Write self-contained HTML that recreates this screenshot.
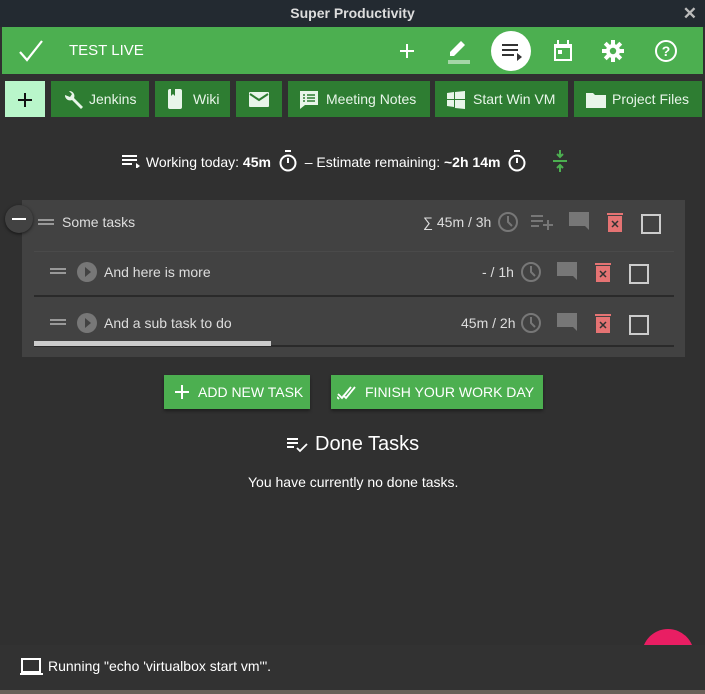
<!DOCTYPE html>
<html><head><meta charset="utf-8"><style>
*{box-sizing:border-box;margin:0;padding:0}
body{width:705px;height:694px;background:#303030;font-family:"Liberation Sans",sans-serif;color:#fff;position:relative;overflow:hidden}
.a{position:absolute}
.title{left:0;top:0;width:705px;height:27px;background:#232a31;text-align:center;font-weight:bold;font-size:14px;line-height:27px;color:#ddd}
.hdr{left:2px;top:27px;width:701px;height:47px;background:#4caf50}
.btn{position:absolute;top:81px;height:36px;background:#2e7d32;font-size:14px;line-height:36px;color:#e8f5e9}
.btn svg{position:absolute;top:8px}
.panel{left:22px;top:200px;width:663px;height:157px;background:#424242}
.t{font-size:14px;color:#ddd}
.gbtn{position:absolute;top:375px;height:34px;background:#4caf50;font-size:14px;line-height:34px;color:#fff;box-shadow:0 2px 3px rgba(0,0,0,.4)}
</style></head><body>
<div class="a title">Super Productivity<span style="position:absolute;right:8px;font-size:17px;color:#bbb">✕</span></div>
<div class="a hdr">
<svg class="a" style="left:16px;top:12px" width="26" height="24" viewBox="0 0 26 24"><path d="M2 13 L9 21 L24 2" stroke="#fff" stroke-width="2.2" fill="none"/></svg>
<div class="a" style="left:67px;top:15px;font-size:15px">TEST LIVE</div>
<svg class="a" style="left:397px;top:16px" width="16" height="16"><path d="M8 1v14M1 8h14" stroke="#fff" stroke-width="2"/></svg>
<svg class="a" style="left:444px;top:11px" width="26" height="26"><path d="M4 18 L4 14 L15 3 L19 7 L8 18Z" fill="#fff"/><rect x="2" y="22" width="22" height="4" fill="#a5d6a7"/></svg>
<div class="a" style="left:489px;top:4px;width:40px;height:40px;border-radius:50%;background:#fff"></div>
<svg class="a" style="left:499px;top:16px" width="22" height="18"><path d="M1 2h16M1 7h16M1 12h12" stroke="#333" stroke-width="2"/><path d="M16 10l5 4-5 4z" fill="#333"/></svg>
<svg class="a" style="left:551px;top:13px" width="20" height="22"><rect x="1" y="4" width="18" height="17" fill="#fff"/><rect x="4" y="0" width="2" height="5" fill="#fff"/><rect x="14" y="0" width="2" height="5" fill="#fff"/><rect x="3" y="8" width="14" height="11" fill="#4caf50"/><rect x="5" y="10" width="4" height="4" fill="#fff"/></svg>
<svg class="a" style="left:600px;top:13px" width="22" height="22" viewBox="0 0 22 22"><g fill="#fff"><circle cx="11" cy="11" r="7"/><rect x="9" y="0" width="4" height="22"/><rect x="0" y="9" width="22" height="4"/><rect x="9" y="0" width="4" height="22" transform="rotate(45 11 11)"/><rect x="9" y="0" width="4" height="22" transform="rotate(-45 11 11)"/></g><circle cx="11" cy="11" r="3.2" fill="#4caf50"/></svg>
<div class="a" style="left:653px;top:13px;width:22px;height:22px;border:2px solid #fff;border-radius:50%;font-size:14px;font-weight:bold;text-align:center;line-height:18px">?</div>
</div>
<div class="btn" style="left:5px;width:40px;background:#b9f6ca"><svg style="left:12px;top:11px" width="16" height="16"><path d="M8 1v14M1 8h14" stroke="#111" stroke-width="2"/></svg></div>
<div class="btn" style="left:51px;width:98px;padding-left:38px"><svg style="left:11px;top:8px" width="22" height="22" viewBox="0 0 22 22"><path d="M3 6 a5 5 0 0 0 7 5 l9 9 2-2-9-9 a5 5 0 0 0-5-7 l3 3-2 3z" fill="#e8f5e9"/></svg>Jenkins</div>
<div class="btn" style="left:155px;width:75px;padding-left:38px"><svg style="left:13px" width="14" height="20"><rect width="14" height="20" rx="2" fill="#e8f5e9"/><path d="M3 0v7l2-2 2 2V0" fill="#2e7d32"/></svg>Wiki</div>
<div class="btn" style="left:236px;width:46px"><svg style="left:13px;top:11px" width="20" height="15"><rect width="20" height="15" rx="1" fill="#e8f5e9"/><path d="M1 2l9 6 9-6" stroke="#2e7d32" stroke-width="2" fill="none"/></svg></div>
<div class="btn" style="left:288px;width:142px;padding-left:38px"><svg style="left:11px;top:9px" width="20" height="20"><path d="M1 1h18v14H6l-5 4z" fill="#e8f5e9"/><path d="M4 5h2M8 5h8M4 8h2M8 8h8M4 11h2M8 11h8" stroke="#2e7d32" stroke-width="1.6"/></svg>Meeting Notes</div>
<div class="btn" style="left:435px;width:133px;padding-left:38px"><svg style="left:12px;top:10px" width="18" height="18"><path d="M0 2l7-1v7H0zM8 1l10-1v8H8zM0 9h7v7l-7-1zM8 9h10v9l-10-1z" fill="#e8f5e9"/></svg>Start Win VM</div>
<div class="btn" style="left:574px;width:128px;padding-left:38px"><svg style="left:12px;top:11px" width="20" height="16"><path d="M0 1h7l2 2h11v13H0z" fill="#e8f5e9"/></svg>Project Files</div>

<div class="a" style="left:122px;top:150px;font-size:14px;line-height:20px;white-space:nowrap">
<svg width="20" height="14" style="vertical-align:-1px"><path d="M0 2h15M0 6h15M0 10h10" stroke="#fff" stroke-width="2"/><path d="M14 9l4 3-4 3z" fill="#fff"/></svg> Working today: <b>45m</b> <svg width="20" height="22" style="vertical-align:-5px;margin:0 3px"><rect x="7" y="0" width="6" height="2" fill="#fff"/><circle cx="10" cy="13" r="7.5" stroke="#fff" stroke-width="2" fill="none"/><path d="M10 13V8" stroke="#fff" stroke-width="2"/></svg> – Estimate remaining: <b>~2h 14m</b> <svg width="20" height="22" style="vertical-align:-5px;margin-left:3px"><rect x="7" y="0" width="6" height="2" fill="#fff"/><circle cx="10" cy="13" r="7.5" stroke="#fff" stroke-width="2" fill="none"/><path d="M10 13V8" stroke="#fff" stroke-width="2"/></svg>
</div>
<svg class="a" style="left:552px;top:150px" width="16" height="22"><path d="M8 0v6M5 4l3 3 3-3M8 22v-6M5 18l3-3 3 3" stroke="#4caf50" stroke-width="2" fill="none"/><path d="M1 11h14" stroke="#4caf50" stroke-width="2"/></svg>

<div class="a panel">
 <div class="a" style="left:12px;top:51px;width:640px;border-top:1px solid #4a4a4a"></div>
 <div class="a" style="left:12px;top:95px;width:640px;border-top:2px solid #2a2a2a"></div>
 <div class="a" style="left:12px;top:145px;width:640px;border-top:2px solid #2a2a2a"></div>
 <div class="a" style="left:12px;top:141px;width:237px;height:5px;background:#ccc"></div>
</div>
<div class="a" style="left:5px;top:205px;width:28px;height:28px;border-radius:50%;background:#424242;box-shadow:0 1px 3px rgba(0,0,0,.6)"><div class="a" style="left:7px;top:13px;width:14px;height:2px;background:#fff"></div></div>
<div class="a" style="left:38px;top:219px;width:16px;height:6px;border-top:2px solid #999;border-bottom:2px solid #999"></div>
<div class="a t" style="left:62px;top:214px">Some tasks</div>
<div class="a t" style="left:423px;top:214px">∑ 45m / 3h</div>
<svg class="a" style="left:497px;top:211px" width="22" height="22"><circle cx="11" cy="11" r="9" stroke="#777" stroke-width="2" fill="none"/><path d="M11 5v6l4 4" stroke="#777" stroke-width="2" fill="none"/></svg>
<svg class="a" style="left:531px;top:214px" width="24" height="16"><path d="M0 2h12M0 7h12M0 12h8M17 6v10M12 11h10" stroke="#777" stroke-width="2"/></svg>
<svg class="a" style="left:569px;top:212px" width="20" height="22"><path d="M0 0h20v18l-4-4H0z" fill="#777"/></svg>
<svg class="a" style="left:607px;top:212px" width="16" height="20"><rect x="1" y="4" width="14" height="16" fill="#e57373"/><rect x="0" y="1" width="16" height="2" fill="#e57373"/><path d="M5 9l6 6M11 9l-6 6" stroke="#333" stroke-width="1.5"/></svg>
<div class="a" style="left:641px;top:214px;width:20px;height:20px;border:2px solid #ccc"></div>

<div class="a" style="left:50px;top:268px;width:16px;height:6px;border-top:2px solid #999;border-bottom:2px solid #999"></div>
<div class="a" style="left:77px;top:262px;width:20px;height:20px;border-radius:50%;background:#777"><div class="a" style="left:8px;top:5px;border-left:6px solid #424242;border-top:5px solid transparent;border-bottom:5px solid transparent"></div></div>
<div class="a t" style="left:104px;top:264px">And here is more</div>
<div class="a t" style="left:482px;top:264px">- / 1h</div>
<svg class="a" style="left:520px;top:261px" width="22" height="22"><circle cx="11" cy="11" r="9" stroke="#777" stroke-width="2" fill="none"/><path d="M11 5v6l4 4" stroke="#777" stroke-width="2" fill="none"/></svg>
<svg class="a" style="left:557px;top:262px" width="20" height="22"><path d="M0 0h20v18l-4-4H0z" fill="#777"/></svg>
<svg class="a" style="left:595px;top:262px" width="16" height="20"><rect x="1" y="4" width="14" height="16" fill="#e57373"/><rect x="0" y="1" width="16" height="2" fill="#e57373"/><path d="M5 9l6 6M11 9l-6 6" stroke="#333" stroke-width="1.5"/></svg>
<div class="a" style="left:629px;top:264px;width:20px;height:20px;border:2px solid #ccc"></div>

<div class="a" style="left:50px;top:319px;width:16px;height:6px;border-top:2px solid #999;border-bottom:2px solid #999"></div>
<div class="a" style="left:77px;top:313px;width:20px;height:20px;border-radius:50%;background:#777"><div class="a" style="left:8px;top:5px;border-left:6px solid #424242;border-top:5px solid transparent;border-bottom:5px solid transparent"></div></div>
<div class="a t" style="left:104px;top:315px">And a sub task to do</div>
<div class="a t" style="left:461px;top:315px">45m / 2h</div>
<svg class="a" style="left:520px;top:312px" width="22" height="22"><circle cx="11" cy="11" r="9" stroke="#777" stroke-width="2" fill="none"/><path d="M11 5v6l4 4" stroke="#777" stroke-width="2" fill="none"/></svg>
<svg class="a" style="left:557px;top:313px" width="20" height="22"><path d="M0 0h20v18l-4-4H0z" fill="#777"/></svg>
<svg class="a" style="left:595px;top:313px" width="16" height="20"><rect x="1" y="4" width="14" height="16" fill="#e57373"/><rect x="0" y="1" width="16" height="2" fill="#e57373"/><path d="M5 9l6 6M11 9l-6 6" stroke="#333" stroke-width="1.5"/></svg>
<div class="a" style="left:629px;top:315px;width:20px;height:20px;border:2px solid #ccc"></div>

<div class="gbtn" style="left:164px;width:146px;padding-left:34px"><svg class="a" style="left:11px;top:10px" width="14" height="14"><path d="M7 0v14M0 7h14" stroke="#fff" stroke-width="2"/></svg>ADD NEW TASK</div>
<div class="gbtn" style="left:331px;width:212px;padding-left:34px"><svg class="a" style="left:6px;top:10px" width="24" height="16"><path d="M1 9l4 4 9-11M6 10l3 3 9-11M0 12l2 2" stroke="#fff" stroke-width="1.8" fill="none"/></svg>FINISH YOUR WORK DAY</div>

<svg class="a" style="left:287px;top:437px" width="22" height="16"><path d="M0 2h11M0 6h11M0 10h7" stroke="#fff" stroke-width="2"/><path d="M10 11l3 3 7-7" stroke="#fff" stroke-width="1.8" fill="none"/></svg>
<div class="a" style="left:315px;top:433px;font-size:20px">Done Tasks</div>
<div class="a" style="left:248px;top:474px;font-size:14px">You have currently no done tasks.</div>

<div class="a" style="left:642px;top:629px;width:52px;height:52px;border-radius:50%;background:#e91e63"></div>
<div class="a" style="left:0;top:645px;width:705px;height:45px;background:#323232"></div>
<svg class="a" style="left:20px;top:658px" width="24" height="18"><rect x="2" y="1" width="18" height="13" stroke="#fff" stroke-width="2" fill="none"/><rect x="0" y="15" width="23" height="2" fill="#fff"/></svg>
<div class="a" style="left:48px;top:658px;font-size:14px">Running "echo 'virtualbox start vm'".</div>
<div class="a" style="left:0;top:690px;width:705px;height:4px;background:#6a6058"></div>
</body></html>
